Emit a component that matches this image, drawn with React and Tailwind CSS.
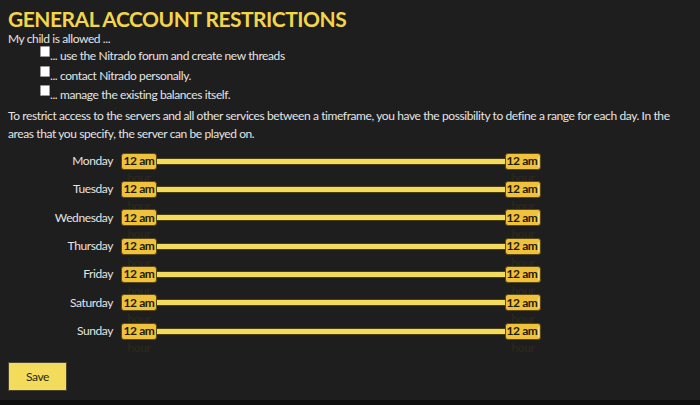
const days = ["Monday", "Tuesday", "Wednesday", "Thursday", "Friday", "Saturday", "Sunday"];

const permissions = [
  "... use the Nitrado forum and create new threads",
  "... contact Nitrado personally.",
  "... manage the existing balances itself.",
];

function Handle({ grip }) {
  return (
    <div className="relative">
      <div className="relative flex h-[17px] w-[36px] items-center justify-center rounded-[3px] border border-[#5c4a16] bg-[#f0c23c] text-[12px] font-bold leading-none tracking-[-0.4px] text-[#221c08]">
        <span className={grip ? "pr-[2px]" : ""}>12 am</span>
        {grip && <span className="absolute right-[1px] top-[3px] h-[10px] w-px bg-[#f7e08a]" />}
      </div>
      {/* unit label under each handle, nearly invisible */}
      <span className="absolute left-0 right-0 top-[19px] text-center text-[12px] leading-none text-[#2e2a1a]">
        hour
      </span>
    </div>
  );
}

export default function App() {
  return (
    <div className="flex h-[405px] w-[700px] flex-col bg-[#1e1e1e] font-['Lato','Open_Sans',sans-serif] tracking-[-0.4px] text-[#e4e4e4]">
      <div className="flex-1 px-2 pt-[6px]">
        <h1 className="text-[21px] font-bold leading-[26px] tracking-[-0.5px] text-[#f2d54b]">GENERAL ACCOUNT RESTRICTIONS</h1>
        <p className="text-[12px] leading-[14px]">My child is allowed ...</p>

        <div className="mt-[1px] flex flex-col gap-[2.5px] pl-8">
          {permissions.map((text) => (
            <label key={text} className="flex h-[17px] items-start text-[12px] leading-[17px]">
              <span className="mt-[-1px] h-[11px] w-[10px] shrink-0 rounded-[1px] border border-[#9a9a9a] bg-white" />
              <span>{text}</span>
            </label>
          ))}
        </div>

        <p className="mt-[4px] text-[12px] leading-[18px]">
          To restrict access to the servers and all other services between a timeframe, you have the possibility to define a range for each day. In the areas that you specify, the server can be played on.
        </p>

        <div className="mt-[4px] flex flex-col">
          {days.map((day) => (
            <div key={day} className="flex h-[28.33px] items-center">
              <span className="w-[105px] text-right text-[12px]">{day}</span>
              <div className="ml-[8px] flex w-[420px] items-center">
                <Handle />
                <div className="h-[7px] flex-1 border-y border-[#4a3f14] bg-[#f3dc5b]" />
                <Handle grip />
              </div>
            </div>
          ))}
        </div>

        <button className="mt-[17px] h-[29px] w-[59px] border border-[#4a4530] bg-[#f3dc5b] text-[12px] text-[#2a2610]">
          Save
        </button>
      </div>
      <div className="h-[5px] bg-[#0e0e0e]" />
    </div>
  );
}
